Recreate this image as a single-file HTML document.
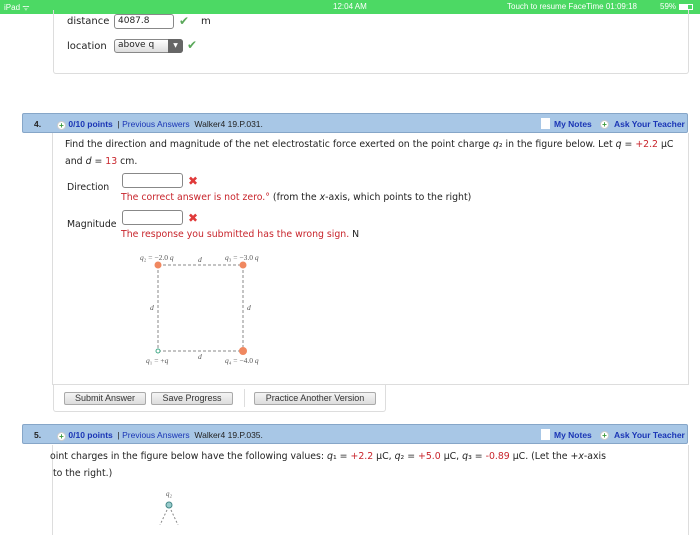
<!DOCTYPE html>
<html><head><meta charset="utf-8"><style>
*{margin:0;padding:0;box-sizing:border-box}
body{width:700px;height:525px;overflow:hidden;background:#fff;font-family:"DejaVu Sans","Liberation Sans",sans-serif;font-size:9.35px;color:#222;position:relative}
.a{position:absolute;white-space:nowrap}
.sb{position:absolute;left:0;top:0;width:700px;height:14px;background:#4cd964;color:#fff;font-family:"Liberation Sans",sans-serif;font-size:8px}
.hdr{position:absolute;left:22px;width:666px;height:20px;background:#a8c7e6;border:1px solid #86a6c8;border-radius:2px;font-family:"Liberation Sans",sans-serif;font-size:8.5px;font-weight:bold}
.blue{color:#1a35b5}
.red{color:#c8252c}
.plus{display:inline-block;width:9px;height:9px;border-radius:50%;background:#fff;border:1px solid #ccc;color:#3a9a3a;font-size:8px;line-height:7px;text-align:center;vertical-align:-1px}
.inp{position:absolute;height:15px;border:1px solid #888;border-radius:3px;background:#fff}
.btn{position:absolute;height:13px;border:1px solid #aaa;border-radius:2px;background:linear-gradient(#f4f4f4,#ddd);font-family:"Liberation Sans",sans-serif;font-size:9px;text-align:center;line-height:11px;color:#333}
.x{color:#e03a3a;font-weight:bold;font-size:12px}
.chk{color:#5aa85a;font-size:12px;font-weight:bold}
</style></head><body>
<div class="sb"><span class="a" style="left:4px;top:2px">iPad ᯤ</span><span class="a" style="left:333px;top:2px">12:04 AM</span><span class="a" style="left:507px;top:2px">Touch to resume FaceTime  01:09:18</span><span class="a" style="left:660px;top:2px">59%</span><span class="a" style="left:679px;top:4px;width:14px;height:6px;border:1px solid #fff;"><span style="display:block;width:8px;height:4px;background:#fff"></span></span></div>

<div class="a" style="left:53px;top:10px;width:636px;height:64px;border:1px solid #ddd;border-top:none;border-radius:0 0 3px 3px"></div>
<span class="a" style="left:67px;top:16px;font-size:10px">distance</span>
<div class="inp" style="left:114px;top:14px;width:60px"></div><span class="a" style="left:118px;top:16px;font-size:9px">4087.8</span>
<span class="a chk" style="left:179px;top:14px">✔</span><span class="a" style="left:201px;top:16px;font-size:10px">m</span>
<span class="a" style="left:67px;top:41px;font-size:10px">location</span>
<div class="a" style="left:114px;top:39px;width:69px;height:14px;border:1px solid #888;border-radius:3px;background:linear-gradient(#fff,#ddd)"></div>
<span class="a" style="left:118px;top:40px;font-size:9px">above q</span>
<div class="a" style="left:168px;top:39px;width:15px;height:14px;background:#666;border-radius:0 3px 3px 0;color:#fff;font-size:6px;text-align:center;line-height:14px">▼</div>
<span class="a chk" style="left:187px;top:38px">✔</span>

<div class="hdr" style="top:113px"><span class="a" style="left:11px;top:5px">4.</span><span class="a" style="left:34px;top:5px"><span class="plus">+</span> <span class="blue">0/10 points</span> <span style="font-weight:normal">&nbsp;| <span class="blue">Previous Answers</span> &nbsp;Walker4 19.P.031.</span></span>
<span class="a" style="left:518px;top:4px;width:9px;height:11px;background:#fff"></span><span class="a blue" style="left:531px;top:5px">My Notes</span><span class="a" style="left:577px;top:4px"><span class="plus">+</span></span><span class="a blue" style="left:591px;top:5px">Ask Your Teacher</span></div>

<div class="a" style="left:52px;top:133px;width:637px;height:252px;border:1px solid #ddd;border-top:none"></div>
<span class="a" style="left:65px;top:139px">Find the direction and magnitude of the net electrostatic force exerted on the point charge <i>q</i>₂ in the figure below. Let <i>q</i> = <span class="red">+2.2</span> μC</span>
<span class="a" style="left:65px;top:156px">and <i>d</i> = <span class="red">13</span> cm.</span>
<span class="a" style="left:67px;top:182px">Direction</span>
<div class="inp" style="left:122px;top:173px;width:61px"></div><span class="a x" style="left:188px;top:174px">✖</span>
<span class="a red" style="left:121px;top:192px">The correct answer is not zero.° <span style="color:#222">(from the <i>x</i>-axis, which points to the right)</span></span>
<span class="a" style="left:67px;top:219px">Magnitude</span>
<div class="inp" style="left:122px;top:210px;width:61px"></div><span class="a x" style="left:188px;top:211px">✖</span>
<span class="a red" style="left:121px;top:229px">The response you submitted has the wrong sign. <span style="color:#222">N</span></span>

<svg class="a" style="left:130px;top:245px" width="150" height="125" font-family="Liberation Serif" font-size="7.5" fill="#555">
<g stroke="#888" stroke-dasharray="3,2" fill="none"><line x1="28" y1="20" x2="113" y2="20"/><line x1="28" y1="20" x2="28" y2="106"/><line x1="113" y1="20" x2="113" y2="106"/><line x1="28" y1="106" x2="113" y2="106"/></g>
<circle cx="28" cy="20" r="3.5" fill="#f08860"/><circle cx="113" cy="20" r="3.5" fill="#f08860"/><circle cx="113" cy="106" r="4" fill="#f08860"/><circle cx="28" cy="106" r="2" fill="#fff" stroke="#4a8"/>
<text x="10" y="15"><tspan font-style="italic">q</tspan>₂ = −2.0 <tspan font-style="italic">q</tspan></text>
<text x="68" y="17" font-style="italic">d</text>
<text x="95" y="15"><tspan font-style="italic">q</tspan>₃ = −3.0 <tspan font-style="italic">q</tspan></text>
<text x="20" y="65" font-style="italic">d</text><text x="117" y="65" font-style="italic">d</text>
<text x="16" y="118"><tspan font-style="italic">q</tspan>₁ = +<tspan font-style="italic">q</tspan></text>
<text x="68" y="114" font-style="italic">d</text>
<text x="95" y="118"><tspan font-style="italic">q</tspan>₄ = −4.0 <tspan font-style="italic">q</tspan></text>
</svg>

<div class="a" style="left:53px;top:385px;width:333px;height:27px;border:1px solid #ddd;border-top:none;border-radius:0 0 3px 3px"></div>
<div class="btn" style="left:64px;top:392px;width:82px">Submit Answer</div>
<div class="btn" style="left:151px;top:392px;width:82px">Save Progress</div>
<div class="a" style="left:244px;top:389px;width:1px;height:18px;background:#ddd"></div>
<div class="btn" style="left:254px;top:392px;width:122px">Practice Another Version</div>

<div class="hdr" style="top:424px"><span class="a" style="left:11px;top:5px">5.</span><span class="a" style="left:34px;top:5px"><span class="plus">+</span> <span class="blue">0/10 points</span> <span style="font-weight:normal">&nbsp;| <span class="blue">Previous Answers</span> &nbsp;Walker4 19.P.035.</span></span>
<span class="a" style="left:518px;top:4px;width:9px;height:11px;background:#fff"></span><span class="a blue" style="left:531px;top:5px">My Notes</span><span class="a" style="left:577px;top:4px"><span class="plus">+</span></span><span class="a blue" style="left:591px;top:5px">Ask Your Teacher</span></div>
<div class="a" style="left:52px;top:445px;width:637px;height:90px;border-left:1px solid #ddd;border-right:1px solid #ddd"></div>
<span class="a" style="left:50px;top:451px">oint charges in the figure below have the following values: <i>q</i>₁ = <span class="red">+2.2</span> μC, <i>q</i>₂ = <span class="red">+5.0</span> μC, <i>q</i>₃ = <span class="red">-0.89</span> μC. (Let the +<i>x</i>-axis</span>
<span class="a" style="left:53px;top:468px">to the right.)</span>
<svg class="a" style="left:150px;top:488px" width="40" height="37" font-family="Liberation Serif" font-size="7" fill="#555"><text x="16" y="8" font-style="italic">q₂</text><circle cx="19" cy="17" r="3" fill="#9cc" stroke="#488"/><g stroke="#888" stroke-dasharray="2,2"><line x1="17" y1="22" x2="10" y2="37"/><line x1="21" y1="22" x2="28" y2="37"/></g></svg>
</body></html>
